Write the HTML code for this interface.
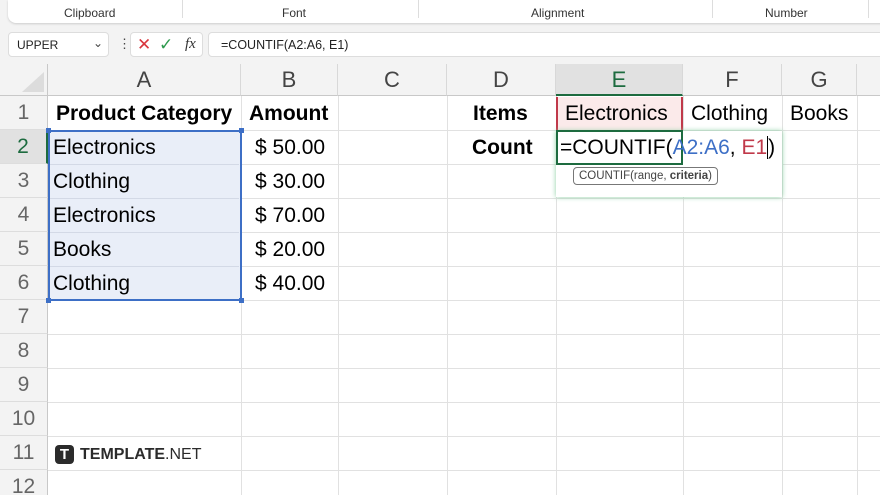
<!DOCTYPE html><html><head><style>
*{margin:0;padding:0;box-sizing:border-box}
html,body{width:880px;height:495px;overflow:hidden}
body{background:#f3f3f3;font-family:"Liberation Sans",sans-serif;position:relative}
.a{position:absolute}
.rib{left:8px;top:0;width:880px;height:23px;background:#fff;border-radius:0 0 8px 8px;box-shadow:0 1px 2px #ccc}
.rl{top:6px;font-size:12px;color:#333}
.vl{top:0;width:1px;height:18px;background:#ddd}
.box{background:#fff;border:1px solid #ddd;border-radius:4px;top:32px;height:25px}
.grid{left:0;top:64px;width:880px;height:431px;background:#fff}
.ch{top:64px;height:32px;background:#f3f3f3;border-right:1px solid #d8d8d8;border-bottom:1px solid #c8c8c8;font-size:22px;color:#444;text-align:center;line-height:32px}
.rh{left:0;width:48px;background:#f3f3f3;border-bottom:1px solid #ddd;border-right:1px solid #c8c8c8;font-size:21px;color:#666;text-align:center;line-height:34px;height:34px}
.hl{left:48px;width:832px;height:1px;background:#e1e1e1}
.vg{top:96px;width:1px;height:399px;background:#e1e1e1}
.c{font-size:21px;color:#000;line-height:34px;height:34px}
.b{font-weight:bold}
.hd{width:5px;height:5px;background:#3d6fc6}
</style></head><body>
<div class="a rib"></div>
<div class="a rl" style="left:64px">Clipboard</div>
<div class="a rl" style="left:282px">Font</div>
<div class="a rl" style="left:531px">Alignment</div>
<div class="a rl" style="left:765px">Number</div>
<div class="a vl" style="left:182px"></div><div class="a vl" style="left:418px"></div><div class="a vl" style="left:712px"></div><div class="a vl" style="left:868px"></div>
<div class="a box" style="left:8px;width:101px"><span class="a" style="left:8px;top:5px;font-size:12px;color:#222">UPPER</span><span class="a" style="left:84px;top:3px;font-size:12px;color:#444">⌄</span></div>
<div class="a" style="left:118px;top:36px;font-size:13px;color:#444">⋮</div>
<div class="a box" style="left:130px;width:73px"><span class="a" style="left:6px;top:2px;font-size:17px;color:#d9363e">✕</span><span class="a" style="left:28px;top:2px;font-size:17px;color:#2e9a4e">✓</span><span class="a" style="left:54px;top:3px;font-size:15px;font-style:italic;font-family:'Liberation Serif',serif;color:#333">fx</span></div>
<div class="a box" style="left:208px;width:680px;border-radius:4px 0 0 4px"><span class="a" style="left:12px;top:5px;font-size:12.5px;color:#222">=COUNTIF(A2:A6, E1)</span></div>
<div class="a grid"></div>
<div class="a" style="left:0;top:64px;width:48px;height:32px;background:#f3f3f3;border-right:1px solid #c8c8c8;border-bottom:1px solid #c8c8c8"></div>
<div class="a" style="left:22px;top:72px;width:0;height:0;border-left:22px solid transparent;border-bottom:20px solid #dcdcdc"></div>
<div class="a ch" style="left:48px;width:193px">A</div>
<div class="a ch" style="left:241px;width:97px">B</div>
<div class="a ch" style="left:338px;width:109px">C</div>
<div class="a ch" style="left:447px;width:109px">D</div>
<div class="a ch" style="left:556px;width:127px;background:#e1e1e1;color:#1d6b3f;border-bottom:2px solid #1d6b3f">E</div>
<div class="a ch" style="left:683px;width:99px">F</div>
<div class="a ch" style="left:782px;width:75px">G</div>
<div class="a ch" style="left:857px;width:30px"></div>
<div class="a rh" style="top:96px">1</div><div class="a rh" style="top:130px;background:#e1e1e1;color:#1d6b3f;border-right:2px solid #1d6b3f">2</div><div class="a rh" style="top:164px">3</div><div class="a rh" style="top:198px">4</div><div class="a rh" style="top:232px">5</div><div class="a rh" style="top:266px">6</div><div class="a rh" style="top:300px">7</div><div class="a rh" style="top:334px">8</div><div class="a rh" style="top:368px">9</div><div class="a rh" style="top:402px">10</div><div class="a rh" style="top:436px">11</div><div class="a rh" style="top:470px">12</div>
<div class="a hl" style="top:130px"></div><div class="a hl" style="top:164px"></div><div class="a hl" style="top:198px"></div><div class="a hl" style="top:232px"></div><div class="a hl" style="top:266px"></div><div class="a hl" style="top:300px"></div><div class="a hl" style="top:334px"></div><div class="a hl" style="top:368px"></div><div class="a hl" style="top:402px"></div><div class="a hl" style="top:436px"></div><div class="a hl" style="top:470px"></div>
<div class="a vg" style="left:241px"></div><div class="a vg" style="left:338px"></div><div class="a vg" style="left:447px"></div><div class="a vg" style="left:556px"></div><div class="a vg" style="left:683px"></div><div class="a vg" style="left:782px"></div><div class="a vg" style="left:857px"></div>
<div class="a" style="left:48px;top:130px;width:194px;height:171px;background:#e9eef8;border:2px solid #3d6fc6"></div>
<div class="a hd" style="left:46px;top:128px"></div><div class="a hd" style="left:239px;top:128px"></div><div class="a hd" style="left:46px;top:298px"></div><div class="a hd" style="left:239px;top:298px"></div>
<div class="a" style="left:50px;top:164px;width:189px;height:1px;background:#d3d9e6"></div><div class="a" style="left:50px;top:198px;width:189px;height:1px;background:#d3d9e6"></div><div class="a" style="left:50px;top:232px;width:189px;height:1px;background:#d3d9e6"></div><div class="a" style="left:50px;top:266px;width:189px;height:1px;background:#d3d9e6"></div>
<div class="a c b" style="left:56px;top:97px">Product Category</div>
<div class="a c b" style="left:249px;top:97px">Amount</div>
<div class="a c" style="left:53px;top:131px">Electronics</div>
<div class="a c" style="left:53px;top:165px">Clothing</div>
<div class="a c" style="left:53px;top:199px">Electronics</div>
<div class="a c" style="left:53px;top:233px">Books</div>
<div class="a c" style="left:53px;top:267px">Clothing</div>
<div class="a c" style="left:255px;top:131px">$ 50.00</div>
<div class="a c" style="left:255px;top:165px">$ 30.00</div>
<div class="a c" style="left:255px;top:199px">$ 70.00</div>
<div class="a c" style="left:255px;top:233px">$ 20.00</div>
<div class="a c" style="left:255px;top:267px">$ 40.00</div>
<div class="a c b" style="left:473px;top:97px">Items</div>
<div class="a c b" style="left:472px;top:131px">Count</div>
<div class="a" style="left:556px;top:97px;width:127px;height:33px;background:#fbeaea;border-left:2px solid #c0394a;border-right:2px solid #c0394a"></div>
<div class="a c" style="left:565px;top:97px">Electronics</div>
<div class="a c" style="left:691px;top:97px">Clothing</div>
<div class="a c" style="left:790px;top:97px">Books</div>
<div class="a" style="left:556px;top:131px;width:226px;height:66px;background:#fff;box-shadow:0 0 5px #8fd0a5"></div>
<div class="a" style="left:556px;top:130px;width:127px;height:35px;border:2px solid #1d6b3f"></div>
<div class="a c" style="left:560px;top:131px;white-space:nowrap">=COUNTIF(<span style="color:#3d6fc6">A2:A6</span>, <span style="color:#c0394a">E1</span><span style="border-left:1px solid #000"></span>)</div>
<div class="a" style="left:573px;top:167px;border:1px solid #777;border-radius:4px;padding:0 5px;font-size:11.5px;color:#444;line-height:16px;background:#fff">COUNTIF(range, <b>criteria</b>)</div>
<div class="a" style="left:55px;top:445px;width:19px;height:19px;background:#2b2b2b;border-radius:4px;color:#fff;font-weight:bold;font-size:15px;text-align:center;line-height:19px">T</div>
<div class="a" style="left:80px;top:445px;font-size:16px;color:#2b2b2b;line-height:19px"><b>TEMPLATE</b>.NET</div>
</body></html>
